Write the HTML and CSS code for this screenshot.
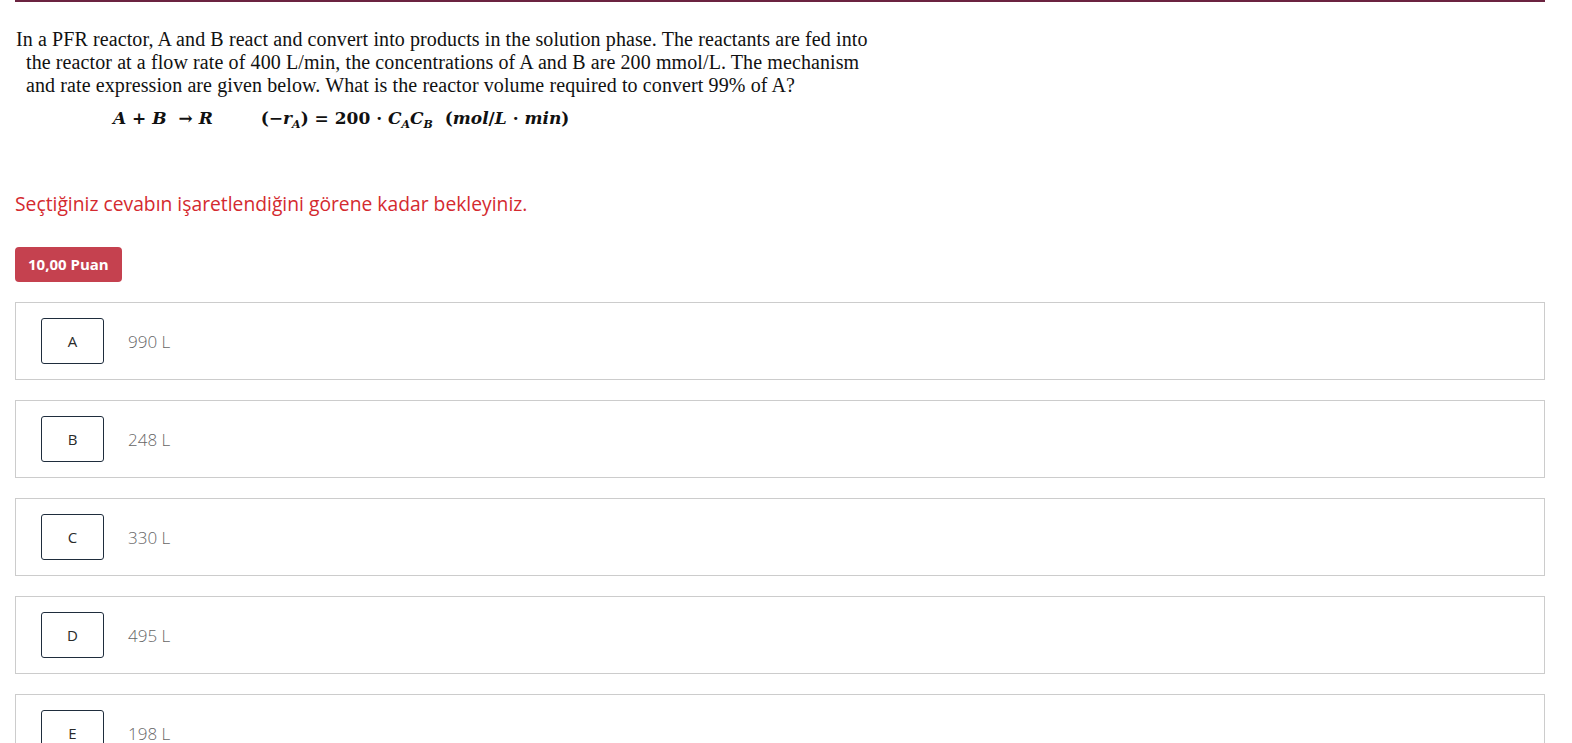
FILE: index.html
```html
<!DOCTYPE html>
<html lang="tr">
<head>
  <meta charset="UTF-8" />
  <meta name="viewport" content="width=device-width, initial-scale=1.0"/>
  <title>Soru</title>
  <link rel="stylesheet" href="styles.css">
</head>
<body>
  <div class="sayfa">
    <div class="ust-cizgi"></div>

    <div class="soru">
      <p class="soru-metin">In a PFR reactor, A and B react and convert into products in the solution phase. The reactants are fed into<br>the reactor at a flow rate of 400 L/min, the concentrations of A and B are 200 mmol/L. The mechanism<br>and rate expression are given below. What is the reactor volume required to convert 99% of A?</p>
      <div class="denklem">
        <span class="tepkime"><i>A</i> + <i>B</i> &nbsp;→ <i>R</i></span>
        <span class="hiz">(−<i>r</i><sub><i>A</i></sub>) = 200 · <i>C</i><sub><i>A</i></sub><i>C</i><sub><i>B</i></sub> &nbsp;(<i>mol</i>/<i>L</i> · <i>min</i>)</span>
      </div>
    </div>

    <div class="uyari">Seçtiğiniz cevabın işaretlendiğini görene kadar bekleyiniz.</div>

    <div class="puan">10,00 Puan</div>

    <div class="secenekler">
      <div class="secenek"><div class="harf">A</div><div class="cevap">990 L</div></div>
      <div class="secenek"><div class="harf">B</div><div class="cevap">248 L</div></div>
      <div class="secenek"><div class="harf">C</div><div class="cevap">330 L</div></div>
      <div class="secenek"><div class="harf">D</div><div class="cevap">495 L</div></div>
      <div class="secenek"><div class="harf">E</div><div class="cevap">198 L</div></div>
    </div>
  </div>
</body>
</html>
```
FILE: styles.css
```css
body {
  margin: 0;
  background: #fff;
  font-family: "Open Sans", Arial, sans-serif;
}
.sayfa {
  padding: 0 27px 0 15px;
}
.ust-cizgi {
  height: 2px;
  background: #6b2340;
}

.soru {
  padding-top: 26px;
}
.soru-metin {
  margin: 0;
  white-space: nowrap;
  padding-left: 11px;
  text-indent: -10px;
  font-family: "Liberation Serif", "Times New Roman", serif;
  font-size: 20px;
  line-height: 23px;
  color: #111;
  letter-spacing: 0.1px;
}
.denklem {
  display: flex;
  gap: 48px;
  margin: 11px 0 0 98px;
  font-family: "DejaVu Serif", "Liberation Serif", serif;
  font-weight: bold;
  font-size: 17px;
  color: #111;
}
.denklem sub {
  font-size: 11px;
}

.uyari {
  margin-top: 59px;
  color: #d42a2f;
  font-size: 19.3px;
  font-family: "Open Sans", Arial, sans-serif;
}

.puan {
  display: inline-block;
  margin-top: 30px;
  padding: 0 13px;
  height: 35px;
  line-height: 35px;
  background: #c5414f;
  color: #fff;
  font-weight: bold;
  font-size: 15px;
  border-radius: 4px;
}

.secenekler {
  margin-top: 20px;
}
.secenek {
  display: flex;
  align-items: center;
  gap: 24px;
  height: 76px;
  padding-left: 25px;
  border: 1px solid #ccc;
  margin-bottom: 20px;
}
.harf {
  width: 61px;
  height: 44px;
  border: 1px solid #1f2d3d;
  border-radius: 3px;
  display: flex;
  align-items: center;
  justify-content: center;
  font-size: 15px;
  color: #2a2a2a;
  font-family: "Open Sans", Arial, sans-serif;
}
.cevap {
  font-size: 17px;
  color: #666;
  font-family: "Open Sans", Arial, sans-serif;
  font-weight: 300;
}
```
